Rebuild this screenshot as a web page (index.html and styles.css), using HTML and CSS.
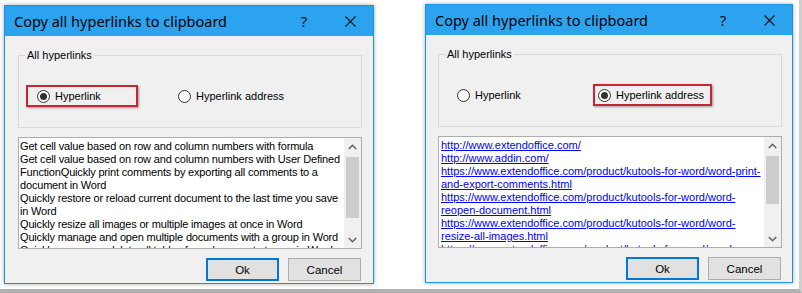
FILE: index.html
```html
<!DOCTYPE html>
<html>
<head>
<meta charset="utf-8">
<link rel="stylesheet" href="styles.css">
</head>
<body>
<div class="screen">
  <section class="dialog dialog-a">
    <header class="titlebar">
      <span class="title">Copy all hyperlinks to clipboard</span>
      <span class="tbtn">?</span>
      <span class="tbtn"><svg width="11" height="11" viewBox="0 0 11 11"><path d="M0.5 0.5L10.5 10.5M10.5 0.5L0.5 10.5" stroke="#111" stroke-width="1.1" fill="none"/></svg></span>
    </header>
    <div class="content">
      <div class="group">
        <span class="legend">All hyperlinks</span>
        <div class="radios">
          <label class="radio checked"><span class="dot"></span>Hyperlink<span class="hl hl-a"></span></label>
          <label class="radio"><span class="dot"></span>Hyperlink address</label>
        </div>
      </div>
      <div class="textbox">
        <div class="lines plain">
          <div>Get cell value based on row and column numbers with formula</div>
          <div>Get cell value based on row and column numbers with User Defined</div>
          <div>FunctionQuickly print comments by exporting all comments to a</div>
          <div>document in Word</div>
          <div>Quickly restore or reload current document to the last time you save</div>
          <div>in Word</div>
          <div>Quickly resize all images or multiple images at once in Word</div>
          <div>Quickly manage and open multiple documents with a group in Word</div>
          <div>Quickly remove or delete all tables from document at once in Word</div>
        </div>
        <div class="scrollbar">
          <span class="arrow"><svg width="9" height="6" viewBox="0 0 9 6"><path d="M0.8 5L4.5 1.3L8.2 5" stroke="#606060" stroke-width="1.5" fill="none"/></svg></span>
          <span class="thumb" style="height:61px"></span>
          <span class="spacer"></span>
          <span class="arrow"><svg width="9" height="6" viewBox="0 0 9 6"><path d="M0.8 1L4.5 4.7L8.2 1" stroke="#606060" stroke-width="1.5" fill="none"/></svg></span>
        </div>
      </div>
      <div class="buttons">
        <button class="btn btn-default">Ok</button>
        <button class="btn">Cancel</button>
      </div>
    </div>
  </section>

  <section class="dialog dialog-b">
    <header class="titlebar">
      <span class="title">Copy all hyperlinks to clipboard</span>
      <span class="tbtn">?</span>
      <span class="tbtn"><svg width="11" height="11" viewBox="0 0 11 11"><path d="M0.5 0.5L10.5 10.5M10.5 0.5L0.5 10.5" stroke="#111" stroke-width="1.1" fill="none"/></svg></span>
    </header>
    <div class="content">
      <div class="group">
        <span class="legend">All hyperlinks</span>
        <div class="radios">
          <label class="radio"><span class="dot"></span>Hyperlink</label>
          <label class="radio checked"><span class="dot"></span>Hyperlink address<span class="hl hl-b"></span></label>
        </div>
      </div>
      <div class="textbox">
        <div class="lines links">
          <a href="#">http://www.extendoffice.com/</a>
          <a href="#">http://www.addin.com/</a>
          <a href="#">https://www.extendoffice.com/product/kutools-for-word/word-print-<br>and-export-comments.html</a>
          <a href="#">https://www.extendoffice.com/product/kutools-for-word/word-<br>reopen-document.html</a>
          <a href="#">https://www.extendoffice.com/product/kutools-for-word/word-<br>resize-all-images.html</a>
          <a href="#">https://www.extendoffice.com/product/kutools-for-word/word-<br>remove-all-tables.html</a>
        </div>
        <div class="scrollbar">
          <span class="arrow"><svg width="9" height="6" viewBox="0 0 9 6"><path d="M0.8 5L4.5 1.3L8.2 5" stroke="#606060" stroke-width="1.5" fill="none"/></svg></span>
          <span class="thumb" style="height:48px"></span>
          <span class="spacer"></span>
          <span class="arrow"><svg width="9" height="6" viewBox="0 0 9 6"><path d="M0.8 1L4.5 4.7L8.2 1" stroke="#606060" stroke-width="1.5" fill="none"/></svg></span>
        </div>
      </div>
      <div class="buttons">
        <button class="btn btn-default">Ok</button>
        <button class="btn">Cancel</button>
      </div>
    </div>
  </section>
</div>
</body>
</html>
```

FILE: styles.css
```css
html, body {
  margin: 0;
  padding: 0;
  background: #ffffff;
}

.screen {
  box-sizing: border-box;
  width: 802px;
  height: 293px;
  padding-left: 4px;
  display: flex;
  align-items: flex-start;
  gap: 51px;
  border-right: 3px solid #cfcfcf;
  border-bottom: 4px solid #b2b2b2;
  font-family: "Liberation Sans", Arial, sans-serif;
  font-size: 11px;
  color: #000;
}

.dialog {
  box-sizing: border-box;
  border: 1px solid #1e92e6;
  background: #f0f0f0;
  box-shadow: 0 0 4px rgba(0, 0, 0, 0.35);
  display: flex;
  flex-direction: column;
}

.dialog-a {
  width: 370px;
  margin-top: 5px;
}

.dialog-b {
  width: 368px;
  margin-top: 4px;
}

.titlebar {
  height: 30px;
  background: #2ba3ef;
  display: flex;
  align-items: center;
}

.title {
  flex: 1;
  padding-left: 9px;
  font-family: "Noto Sans", "Open Sans", sans-serif;
  font-size: 14.5px;
  color: #000;
}

.tbtn {
  width: 46px;
  height: 30px;
  display: flex;
  align-items: center;
  justify-content: center;
  font-family: "Noto Sans", sans-serif;
  font-size: 15px;
  color: #111;
}

.content {
  padding: 19px 11px 2px 13px;
  display: flex;
  flex-direction: column;
}

.dialog-b .content {
  padding-left: 12px;
  padding-right: 10px;
}

.group {
  box-sizing: border-box;
  height: 73px;
  border: 1px solid #d9d9d9;
  padding-left: 18px;
}

.legend {
  display: table;
  margin: -7px 0 0 -12px;
  padding: 0 2px;
  background: #f0f0f0;
  line-height: 13px;
}

.radios {
  display: grid;
  grid-template-columns: 141px auto;
  margin-top: 28px;
}

.radio {
  position: relative;
  display: flex;
  align-items: center;
  gap: 5px;
  line-height: 13px;
  height: 13px;
  white-space: nowrap;
}

.dot {
  box-sizing: border-box;
  width: 13px;
  height: 13px;
  border: 1px solid #333;
  border-radius: 50%;
  background: #fff;
  display: flex;
  align-items: center;
  justify-content: center;
}

.checked .dot::after {
  content: "";
  width: 7px;
  height: 7px;
  border-radius: 50%;
  background: #333;
}

.hl {
  position: absolute;
  box-sizing: border-box;
  top: -5px;
  height: 22px;
  border: 2px solid #c92634;
  box-shadow: 1px 1px 2px rgba(0, 0, 0, 0.35);
}

.hl-a {
  left: -11px;
  width: 112px;
}

.hl-b {
  left: -5px;
  width: 119px;
}

.textbox {
  box-sizing: border-box;
  margin-top: 9px;
  height: 112px;
  border: 1px solid #adadad;
  background: #fff;
  display: flex;
  overflow: hidden;
}

.lines {
  flex: 1;
  padding: 2px 1px;
  line-height: 13px;
  white-space: nowrap;
  overflow: hidden;
}

.plain {
  letter-spacing: -0.18px;
}

.links {
  padding-left: 2px;
}

.links a {
  display: block;
  color: #0000ff;
  text-decoration: underline;
}

.scrollbar {
  width: 17px;
  background: #f0f0f0;
  display: flex;
  flex-direction: column;
  align-items: center;
}

.arrow {
  width: 17px;
  height: 17px;
  display: flex;
  align-items: center;
  justify-content: center;
}

.thumb {
  width: 13px;
  margin-top: 2px;
  background: #cdcdcd;
}

.spacer {
  flex: 1;
}

.buttons {
  margin-top: 9px;
  display: flex;
  justify-content: flex-end;
  gap: 9px;
  margin-right: 1px;
}

.btn {
  box-sizing: border-box;
  width: 73px;
  height: 23px;
  border: 1px solid #adadad;
  background: #e1e1e1;
  font-family: "Liberation Sans", Arial, sans-serif;
  font-size: 11.5px;
  color: #000;
  padding: 0;
}

.btn-default {
  border: 2px solid #0078d7;
}
```
